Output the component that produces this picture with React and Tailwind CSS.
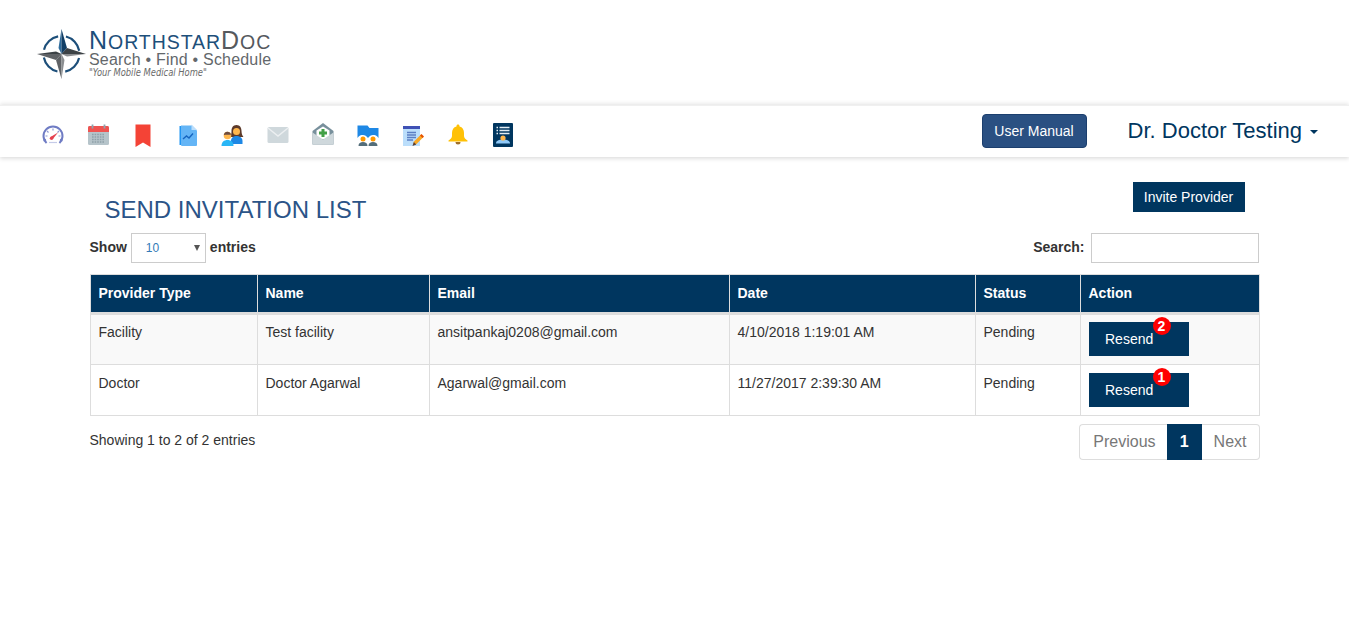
import React from "react";

const Icon = ({ children }) => (
  <svg width="24" height="24" viewBox="0 0 24 24" className="block">{children}</svg>
);

const icons = [
  <Icon key="g">
    <path d="M5.600 20A9.500 9.500 0 1 1 18.400 20" fill="#fff" stroke="#6f7cc4" strokeWidth="2" />
    <path d="M2.500 17.500l2.500-.8M21.500 17.500l-2.500-.8" stroke="#6f7cc4" strokeWidth="2" />
    <path d="M6 8l1.500 1.500M12 5.500v2M18 8l-1.500 1.500M4.500 13h2M17.500 13h2" stroke="#8f99d2" strokeWidth="1.200" />
    <path d="M9.500 14L17 9.500 11.500 16.500z" fill="#e5414f" />
    <circle cx="10.500" cy="15.300" r="1.700" fill="#e5414f" />
    <path d="M8 19.500h8" stroke="#c5cbe8" strokeWidth="1.200" />
  </Icon>,
  <Icon key="c">
    <rect x="2" y="3" width="21" height="19" rx="1.500" fill="#b6c4ca" />
    <path d="M2 4.500A1.500 1.500 0 0 1 3.500 3h18A1.500 1.500 0 0 1 23 4.500V9H2z" fill="#ef5350" />
    <path d="M6.500 1.500v4M18.500 1.500v4" stroke="#90a4ae" strokeWidth="1.800" />
    <path d="M6 11.500h13M6 14h13M6 16.500h13M6 19h13" stroke="#8ea0a8" strokeWidth="1.400" strokeDasharray="1.600 1" />
  </Icon>,
  <Icon key="b">
    <path d="M4.500 1.500h15v22.500L12 19.500 4.500 24z" fill="#f44336" />
  </Icon>,
  <Icon key="d">
    <path d="M5 2.500h11l5 5V22a1 1 0 0 1-1 1H6a1 1 0 0 1-1-1z" fill="#64b5f6" />
    <path d="M3.500 3h1.500v19h-1.500z" fill="#2196f3" />
    <path d="M15.500 1.500l5.500 5.500h-5.500z" fill="#bbdefb" />
    <path d="M7 16l3.500-3 2.500 2 4-4.500" fill="none" stroke="#1565c0" strokeWidth="1.400" />
  </Icon>,
  <Icon key="p">
    <path d="M15.500 2c3.500 0 5 2.800 5 6 0 3 1 5 2 6H9c1-1.500 1.500-3 1.500-6 0-3.200 1.500-6 5-6z" fill="#5d3a2a" />
    <path d="M10 18c0-3.500 2.500-5 5.500-5s6 1.500 6 5v3H10z" fill="#1e88e5" />
    <circle cx="15.500" cy="8.500" r="3.500" fill="#ffb74d" />
    <path d="M0.500 23c0-4 2.500-6 6-6s6 2 6 6z" fill="#29b6f6" />
    <circle cx="6.500" cy="12.500" r="3.800" fill="#ffb74d" />
    <path d="M2.800 12a3.800 3.800 0 0 1 7.400-.5c-2 .5-5 0-7.400.5z" fill="#6d4c41" />
  </Icon>,
  <Icon key="m">
    <rect x="1.500" y="4" width="21" height="16" rx="1.500" fill="#cfd8dc" />
    <path d="M2 5l10 8 10-8" fill="none" stroke="#eceff1" strokeWidth="1.400" />
  </Icon>,
  <Icon key="o">
    <path d="M1.500 8L12 0l10.500 8v13.500h-21z" fill="#78909c" />
    <path d="M5.500 7.500L12 3.500l6.500 4V16h-13z" fill="#fff" />
    <path d="M10.500 6h3v2.500H16v3h-2.500V14h-3v-2.500H8v-3h2.500z" fill="#43a047" />
    <path d="M1.500 9.500L12 16.500l10.500-7v12h-21z" fill="#cfd8dc" />
  </Icon>,
  <Icon key="u">
    <path d="M1.500 2.500h10l2 2.500h9v10c-1.500-2.500-3.500-3-5.500-3s-3.500 1-5 3c-1.500-2-3-3-5-3s-4 .5-5.500 3z" fill="#1e88e5" />
    <circle cx="7" cy="16" r="2.500" fill="#ff9800" />
    <circle cx="17" cy="16" r="2.500" fill="#ff9800" />
    <path d="M2.500 23c0-3 2-4 4.500-4s4.500 1 4.500 4zM12.500 23c0-3 2-4 4.500-4s4.500 1 4.500 4z" fill="#546e7a" />
  </Icon>,
  <Icon key="n">
    <rect x="2" y="3" width="17" height="20" fill="#bbdefb" />
    <rect x="2" y="3" width="17" height="3" fill="#3f51b5" />
    <path d="M6 9.500h9M6 12h9M6 14.500h9M6 17h6" stroke="#5c7fc4" strokeWidth="1.300" />
    <path d="M12 22l1-3.500 7-7 2.500 2.500-7 7z" fill="#f9a825" />
    <path d="M19 12.500l1.500-1.500 2.500 2.500-1.500 1.500z" fill="#e65100" />
    <path d="M11.500 23l1.300-4 2.500 2.500z" fill="#5d4037" />
  </Icon>,
  <Icon key="be">
    <path d="M12 1.500c.9 0 1.500.6 1.500 1.500v.5c3 .7 4.500 3.200 4.500 6.500v3c0 2 1.500 3 3.500 4.500v1h-19v-1c2-1.500 3.500-2.500 3.500-4.500v-3c0-3.300 1.500-5.800 4.500-6.500V3c0-.9.600-1.500 1.500-1.500z" fill="#ffc107" />
    <path d="M9.500 19h5a2.500 2.500 0 0 1-5 0z" fill="#a1702a" />
  </Icon>,
  <Icon key="l">
    <rect x="2" y="0" width="20" height="24" rx="1" fill="#00365f" />
    <path d="M8.500 4.500h10M8.500 7.500h10M8.500 10.500h10" stroke="#e3eef5" strokeWidth="1.400" />
    <path d="M5.500 4.500h1.500M5.500 7.500h1.500M5.500 10.500h1.500" stroke="#e3eef5" strokeWidth="1.600" />
    <path d="M5 20.500c0-3 3-4 7-4s7 1 7 4z" fill="#90caf9" />
    <circle cx="12" cy="15" r="2.600" fill="#ffb74d" />
  </Icon>,
];

const Logo = () => (
  <div className="flex items-start">
    <svg width="50" height="52" viewBox="0 0 50 52" className="block shrink-0">
      <circle cx="24.500" cy="26" r="18" fill="none" stroke="#1d4f7a" strokeWidth="2.200" strokeDasharray="20.270 8" strokeDashoffset="-4" />
      <path d="M24.500 1L21.500 20l3 6z" fill="#2f6c9c" />
      <path d="M24.500 1L30 20l-5.500 6z" fill="#123f66" />
      <path d="M49 26L30 20l-5.500 6z" fill="#3c4246" />
      <path d="M49 26L30 28.500l-5.500-2.500z" fill="#8a8d90" />
      <path d="M24.500 51L19 32l5.500-6z" fill="#5f6266" />
      <path d="M24.500 51L27.500 32l-3-6z" fill="#8a8d90" />
      <path d="M0 26L19 32l5.500-6z" fill="#5f6266" />
      <path d="M0 26L19 23.500l5.500 2.500z" fill="#3c4246" />
    </svg>
    <div className="ml-[2px] font-['Liberation_Sans',sans-serif]">
      <div className="mt-[1px] text-[19.500px] leading-[22px] tracking-[0.95px] text-[#1d4f7a] whitespace-nowrap">
        <span className="text-[25px]">N</span>ORTHSTAR<span className="text-[#55595e]"><span className="text-[25px]">D</span>OC</span>
      </div>
      <div className="-mt-[1px] text-[16px] leading-[15px] tracking-[0.2px] text-[#63676b] whitespace-nowrap">Search • Find • Schedule</div>
      <div className="text-[10px] leading-[11px] italic text-[#6a6a6a] whitespace-nowrap font-['DejaVu_Sans_Condensed','Liberation_Sans_Narrow',sans-serif] scale-x-[0.93] origin-left">"Your Mobile Medical Home"</div>
    </div>
  </div>
);

const rows = [
  { type: "Facility", name: "Test facility", email: "ansitpankaj0208@gmail.com", date: "4/10/2018 1:19:01 AM", badge: "2", bg: "bg-[#f9f9f9]", action: "pb-[2px]" },
  { type: "Doctor", name: "Doctor Agarwal", email: "Agarwal@gmail.com", date: "11/27/2017 2:39:30 AM", badge: "1", bg: "bg-white", action: "" },
];

const heads = [
  ["Provider Type", "w-[167px]"],
  ["Name", "w-[172px]"],
  ["Email", "w-[300px]"],
  ["Date", "w-[246px]"],
  ["Status", "w-[105px]"],
  ["Action", "w-[179px]"],
];

export default function App() {
  return (
    <div className="min-h-[628px] bg-white font-['Liberation_Sans',sans-serif] text-[14px] leading-[20px] text-[#333]">
      <header className="h-[105px] pl-[37px] pt-[28px]">
        <Logo />
      </header>
      <nav className="flex h-[52px] items-center border-t-[1px] border-[#f0f0f0] pb-[2px] pl-[41px] pr-[31px] shadow-[0_-2px_4px_rgba(0,0,0,0.08),0_2px_4px_rgba(0,0,0,0.12)]">
        <div className="flex gap-[21px] pt-[8px]">
          {icons.map((ic) => ic)}
        </div>
        <button className="ml-auto h-[34px] w-[105px] rounded-[4px] border border-[#1c3f6e] bg-[#2a5082] text-white">User Manual</button>
        <div className="ml-[41px] flex items-center text-[22px] leading-[30px] text-[#00365f]">
          Dr. Doctor Testing
          <span className="ml-[8px] mt-[2px] h-0 w-0 border-x-[4px] border-t-[4px] border-x-transparent border-t-[#00365f]"></span>
        </div>
      </nav>
      <main className="mx-auto w-[1170px] pt-[25px]">
        <div className="flex h-[51px] items-start justify-between">
          <h1 className="ml-[15px] mt-[13px] text-[24px] leading-[30px] text-[#2b5488]">SEND INVITATION LIST</h1>
          <button className="mr-[15px] h-[30px] w-[112px] bg-[#00365f] text-white">Invite Provider</button>
        </div>
        <div className="flex h-[30px] items-center justify-between font-bold">
          <div className="flex items-center">
            <span className="pb-[2px]">Show</span>
            <div className="mx-[4px] flex h-[30px] w-[75px] items-center justify-between border border-[#ccc] pl-[14px] pr-[5px] text-[12px] font-normal text-[#337ab7]">
              10
              <span className="h-0 w-0 border-x-[3.500px] border-t-[6px] border-x-transparent border-t-[#555]"></span>
            </div>
            <span className="pb-[2px]">entries</span>
          </div>
          <div className="flex items-center">
            <span className="pb-[2px]">Search:</span>
            <input className="ml-[6px] mr-[1px] h-[30px] w-[168px] border border-[#ccc] bg-white" aria-label="Search" />
          </div>
        </div>
        <table className="mt-[11px] w-[1169px] table-fixed border-collapse">
          <thead>
            <tr className="bg-[#00365f] text-left text-white">
              {heads.map(([h, w]) => (
                <th key={h} className={`${w} h-[39px] border border-b-[3px] border-[#ddd] px-[8px] pb-[2px] font-bold`}>{h}</th>
              ))}
            </tr>
          </thead>
          <tbody>
            {rows.map((r) => (
              <tr key={r.name} className={r.bg}>
                <td className="h-[51px] border border-[#ddd] px-[8px] pb-[15px] align-middle">{r.type}</td>
                <td className="border border-[#ddd] px-[8px] pb-[15px]">{r.name}</td>
                <td className="border border-[#ddd] px-[8px] pb-[15px]">{r.email}</td>
                <td className="border border-[#ddd] px-[8px] pb-[15px]">{r.date}</td>
                <td className="border border-[#ddd] px-[8px] pb-[15px]">Pending</td>
                <td className={`border border-[#ddd] px-[8px] ${r.action}`}>
                  <button className="relative block h-[34px] w-[100px] bg-[#00365f] pl-[16.500px] text-left text-white">
                    Resend
                    <span className="absolute left-[64px] top-[-5px] flex h-[18px] w-[18px] items-center justify-center rounded-full bg-[#ff0000] text-[14px] font-bold leading-none text-white">{r.badge}</span>
                  </button>
                </td>
              </tr>
            ))}
          </tbody>
        </table>
        <div className="mt-[8px] flex items-start justify-between">
          <div className="pt-[6px]">Showing 1 to 2 of 2 entries</div>
          <div className="flex h-[36px] text-[16px] leading-[34px]">
            <span className="rounded-l-[4px] border border-r-0 border-[#ddd] pl-[13px] pr-[11px] text-[#777]">Previous</span>
            <span className="w-[35px] bg-[#00365f] text-center font-bold leading-[36px] text-white">1</span>
            <span className="rounded-r-[4px] border border-l-0 border-[#ddd] px-[12px] text-[#777]">Next</span>
          </div>
        </div>
      </main>
    </div>
  );
}
